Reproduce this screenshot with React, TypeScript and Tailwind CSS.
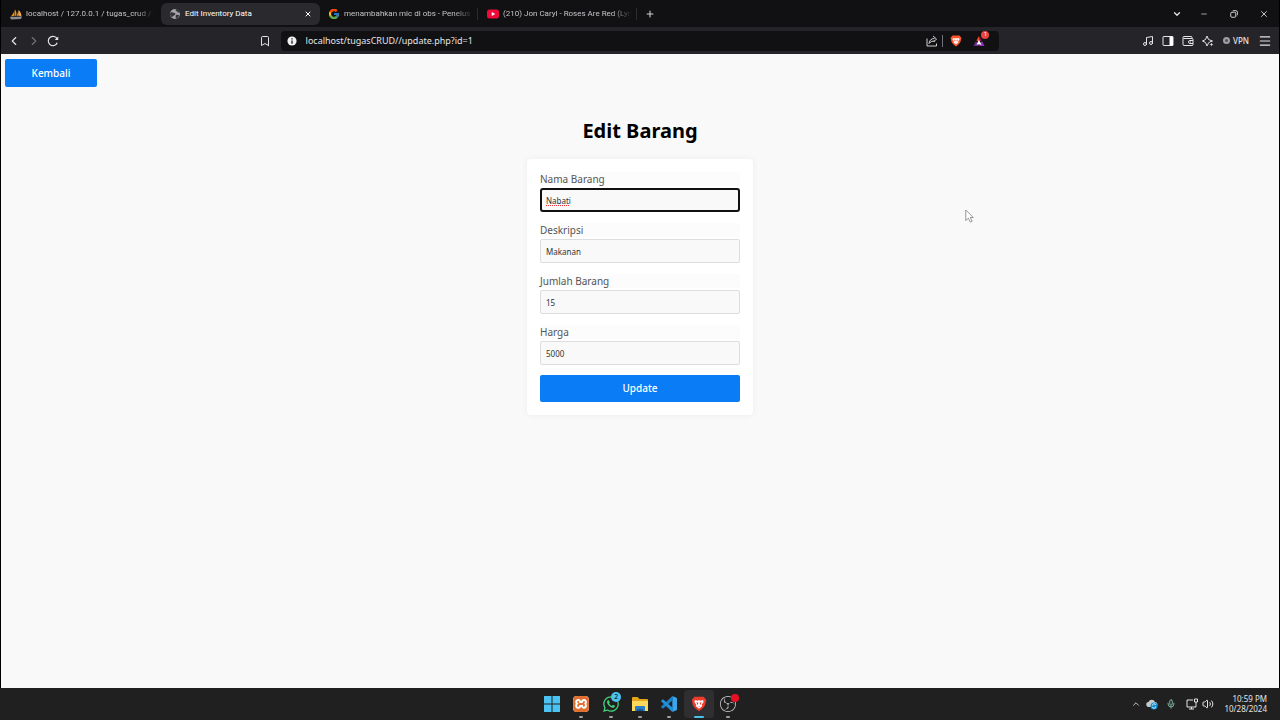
import React from 'react';
import {
  Bookmark,
  ChevronDown,
  ChevronLeft,
  ChevronRight,
  ChevronUp,
  Menu,
  Mic,
  Minus,
  Music,
  Plus,
  Volume2,
  X,
} from 'lucide-react';
import { FcGoogle } from 'react-icons/fc';
import { FaWhatsapp } from 'react-icons/fa';
import { SiObsstudio, SiXampp } from 'react-icons/si';

// --- Icons ---
const PhpMyAdminIcon = () => (
  <svg viewBox="0 0 24 24" className="size-3 shrink-0">
    <path d="M9 3c-1 6-4 11-8 14l8-1zM10 3c3 4 4 9 2 13l-2-1z" fill="#f29111" />
    <path d="M16 4c0 5-1 9-3 12l4-1zM17 4c4 3 6 8 6 13l-6-2z" fill="#f5a94a" />
    <path d="M0 18l24-1-2 5-20 1z" fill="#8b8b94" />
  </svg>
);

const GlobeIcon = () => (
  <svg viewBox="0 0 24 24" className="size-3 shrink-0">
    <circle cx="12" cy="12" r="10" fill="#a3a5aa" />
    <path d="M3 9c3-1 5 1 8 1s2 4-1 5-2 3-4 3-3-3-4-5zM13 3c0 3 3 3 4 5s3 1 5 2l-2-5-4-3zM14 14c3-1 5 0 7 1l-4 5-3 1c-1-2-1-5 0-7z" fill="#35363b" />
  </svg>
);

const YoutubeIcon = () => (
  <svg viewBox="0 0 24 24" className="size-3 shrink-0">
    <rect x="0" y="3" width="24" height="18" rx="5" fill="#f00a3a" />
    <path d="M9.5 8v8l7-4z" fill="#fff" />
  </svg>
);

const ReloadIcon = () => (
  <svg viewBox="0 0 24 24" className="size-3" fill="none" stroke="currentColor" strokeWidth="2.4">
    <path d="M20.500 15.500A9.300 9.300 0 1 1 20.500 8.500" />
    <path d="M22.500 3v7h-7z" fill="currentColor" stroke="none" />
  </svg>
);

const InfoIcon = () => (
  <svg viewBox="0 0 24 24" className="size-[10px] shrink-0">
    <circle cx="12" cy="12" r="11" fill="#f1f1f3" />
    <path d="M10.500 5.500h3v3h-3zM10.500 10.500h3v8h-3z" fill="#111113" />
  </svg>
);

const RestoreIcon = () => (
  <svg viewBox="0 0 16 16" className="size-2" fill="none" stroke="currentColor" strokeWidth="1.8">
    <rect x="1.500" y="4.500" width="10" height="10" rx="2" />
    <path d="M5 2.500C5.500 1.500 6 1.200 7 1.200h4.500a3.300 3.300 0 0 1 3.300 3.300V9c0 1-.5 1.700-1.300 2" />
  </svg>
);

const ShareIcon = () => (
  <svg viewBox="0 0 24 24" className="size-3" fill="none" stroke="currentColor" strokeWidth="1.8">
    <path d="M2 7v15h19v-5" />
    <path d="M6 17c1-7 5-10 11-10M14 2l7 6-6 6M6 17c3-4 7-5 12-5" strokeLinejoin="round" />
  </svg>
);

const RewardsIcon = () => (
  <svg viewBox="0 0 24 24" className="size-3">
    <path d="M12 2L7 11l5 3z" fill="#ff4724" />
    <path d="M12 2l5 9-5 3z" fill="#9e1f63" />
    <path d="M6 12l-5 10h11z" fill="#662d91" />
    <path d="M18 12l5 10H12z" fill="#8f2fc0" />
    <path d="M12 10l5 9H7z" fill="#fff" />
  </svg>
);

const BraveIcon: React.FC<{ className?: string }> = ({ className = '' }) => (
  <svg viewBox="0 0 24 24" className={className}>
    <path d="M5 1h14l4 5-1 3c0 5-3 9-10 14C5 18 2 14 2 9L1 6z" fill="currentColor" />
    <path d="M6 6l4 1 2-1 2 1 4-1 1 3-3 4 1 2-5 4-5-4 1-2-3-4z" fill="#fff" />
    <path d="M8 9l3 1-1 4zM16 9l-3 1 1 4zM10 15l2 1 2-1-2 2z" fill="currentColor" />
  </svg>
);

const SidebarIcon = () => (
  <svg viewBox="0 0 24 24" className="size-3">
    <rect x="2" y="3" width="20" height="18" rx="1" fill="none" stroke="currentColor" strokeWidth="2" />
    <path d="M15 3h7v18h-7z" fill="#fff" />
  </svg>
);

const WalletIcon = () => (
  <svg viewBox="0 0 24 24" className="size-3" fill="none" stroke="currentColor" strokeWidth="2">
    <path d="M20 7V5a2 2 0 0 0-2-2H4a2 2 0 0 0-2 2v14a2 2 0 0 0 2 2h16a2 2 0 0 0 2-2V9a2 2 0 0 0-2-2H3" />
    <path d="M22 11h-6a3 3 0 0 0 0 6h6M16 14h2" />
  </svg>
);

const LeoIcon = () => (
  <svg viewBox="0 0 24 24" className="size-3" fill="none" stroke="currentColor" strokeWidth="2" strokeLinejoin="round">
    <path d="M10 2l3 7 8 3-6 2-2 2-3 6-3-7-6-3 6-3z" />
    <path d="M19 15l1 3 3 1-3 1-1 3-1-3-3-1 3-1z" fill="currentColor" stroke="none" />
  </svg>
);

const WindowsIcon = () => (
  <svg viewBox="0 0 16 16" className="size-4">
    <path d="M0 0h7.500v7.500H0zM8.500 0H16v7.500H8.500zM0 8.500h7.500V16H0zM8.500 8.500H16V16H8.500z" fill="#4cc2f1" />
  </svg>
);

const FolderIcon = () => (
  <svg viewBox="0 0 18 16" className="h-4 w-[18px]">
    <path d="M1 2a1 1 0 0 1 1-1h4.500l2 2H16a1 1 0 0 1 1 1v4H1z" fill="#e5a51b" />
    <path d="M1 5h16v10H1z" fill="#fbd75b" />
    <path d="M4 15v-4a1 1 0 0 1 1-1h8a1 1 0 0 1 1 1v4z" fill="#2b7fc8" />
    <path d="M6 13h6v2H6z" fill="#1c5796" />
  </svg>
);

const VsCodeIcon = () => (
  <svg viewBox="0 0 24 24" className="size-4">
    <path d="M17 0l7 3v18l-7 3z" fill="#3ba4ea" />
    <path d="M17 0l1 6L3 19l-3-2v-1z" fill="#1d7fc4" />
    <path d="M17 24l1-6L3 5 0 7v1z" fill="#2190d8" />
  </svg>
);

const DisplayIcon = () => (
  <svg viewBox="0 0 24 24" className="size-3" fill="none" stroke="currentColor" strokeWidth="2">
    <path d="M14 4H2v14h18v-5M6 22h10M11 18v4" />
    <path d="M17 2h6v6h-6zM20 8v5" />
  </svg>
);

const CloudIcon = () => (
  <svg viewBox="0 0 24 24" className="size-3">
    <path d="M6 18a5 5 0 0 1-1-10 7 7 0 0 1 13 0c3 0 5 2 5 5s-2 5-5 5z" fill="#c5c9cc" />
    <circle cx="16" cy="16" r="7" fill="#1690d0" />
    <path d="M13 15a3 3 0 0 1 6-1M19 17a3 3 0 0 1-6 1" stroke="#fff" strokeWidth="1.500" fill="none" />
  </svg>
);

// --- Tab ---
interface TabProps {
  icon: React.ReactNode;
  title: string;
  active?: boolean;
  divider?: boolean;
}

const Tab: React.FC<TabProps> = ({ icon, title, active = false, divider = false }) => (
  <div
    className={`flex h-[22px] w-[159px] min-w-0 items-center gap-1 pl-2 ${
      active ? 'rounded-md bg-[#2a2a2e] text-white' : 'text-[#c4c4c8]'
    }`}
  >
    {icon}
    <span
      className={`min-w-0 flex-1 whitespace-nowrap font-['Roboto','Noto_Sans',sans-serif] text-[8px] ${
        active ? '' : 'mask-r-from-85%'
      }`}
    >
      {title}
    </span>
    {active ? (
      <button aria-label="Close tab" className="mr-1 p-1">
        <X className="size-2" strokeWidth={3} />
      </button>
    ) : (
      <span className={`mr-px h-3 w-px ${divider ? 'bg-[#2c2c30]' : ''}`} />
    )}
  </div>
);

const TabBar = () => (
  <div className="flex h-[27px] items-center bg-[#111113] pl-px">
    <Tab icon={<PhpMyAdminIcon />} title="localhost / 127.0.0.1 / tugas_crud / i" />
    <Tab icon={<GlobeIcon />} title="Edit Inventory Data" active />
    <Tab icon={<FcGoogle className="size-3 shrink-0" />} title="menambahkan mic di obs - Penelus" divider />
    <Tab icon={<YoutubeIcon />} title="(210) Jon Caryl - Roses Are Red (Lyri" divider />
    <button aria-label="New tab" className="ml-[7px] text-zinc-300">
      <Plus className="size-[10px]" strokeWidth={2.5} />
    </button>
    <div className="ml-auto flex items-center text-zinc-200">
      <button aria-label="Search tabs" className="flex w-6 justify-center">
        <ChevronDown className="size-[10px]" strokeWidth={3} />
      </button>
      <button aria-label="Minimize" className="flex w-[30px] justify-center">
        <Minus className="size-2" />
      </button>
      <button aria-label="Restore" className="flex w-[30px] justify-center">
        <RestoreIcon />
      </button>
      <button aria-label="Close" className="flex w-[30px] justify-center">
        <X className="size-[10px]" />
      </button>
    </div>
  </div>
);

// --- Toolbar ---
const Toolbar = () => (
  <div className="flex h-[27px] items-center bg-[#252529] text-zinc-200">
    <div className="flex flex-1 items-center gap-[6px] pr-[10px] pl-[6px]">
      <button aria-label="Back">
        <ChevronLeft className="size-[14px]" />
      </button>
      <button aria-label="Forward" className="text-zinc-500">
        <ChevronRight className="size-[14px]" />
      </button>
      <button aria-label="Reload">
        <ReloadIcon />
      </button>
      <button aria-label="Bookmark" className="ml-auto">
        <Bookmark className="size-3" />
      </button>
    </div>
    <div className="flex h-5 w-9/16 items-center rounded-sm bg-[#111113] px-[6px]">
      <InfoIcon />
      <input
        aria-label="Address"
        defaultValue="localhost/tugasCRUD//update.php?id=1"
        className="ml-[9px] min-w-0 flex-1 bg-transparent text-[9px] text-zinc-200 outline-none"
      />
      <button aria-label="Share">
        <ShareIcon />
      </button>
      <span className="mx-1 h-3 w-px bg-zinc-500" />
      <button aria-label="Brave Shields" className="mx-[3px] text-[#fb542b]">
        <BraveIcon className="size-3" />
      </button>
      <button aria-label="Brave Rewards" className="relative mx-2">
        <RewardsIcon />
        <span className="absolute -top-1 -right-1 flex size-2 items-center justify-center rounded-full bg-[#e8453c] text-[6px] text-white">
          1
        </span>
      </button>
    </div>
    <div className="flex flex-1 items-center justify-end gap-2 pr-[7px] pl-[9px]">
      <button aria-label="Playlist">
        <Music className="size-3" />
      </button>
      <button aria-label="Sidebar">
        <SidebarIcon />
      </button>
      <button aria-label="Wallet">
        <WalletIcon />
      </button>
      <button aria-label="Leo AI">
        <LeoIcon />
      </button>
      <button className="mx-px flex items-center gap-[3px] text-[8px] font-medium">
        <span className="size-[7px] rounded-full border-2 border-zinc-400 bg-zinc-600" />
        VPN
      </button>
      <button aria-label="Menu">
        <Menu className="size-[14px]" />
      </button>
    </div>
  </div>
);

// --- Form ---
interface FieldProps {
  id: string;
  label: string;
  value: string;
  focused?: boolean;
}

const Field: React.FC<FieldProps> = ({ id, label, value, focused = false }) => (
  <div className="flex flex-col gap-[2px]">
    <label htmlFor={id} className="bg-[#fcfcfc] text-[10px] leading-[14px] text-[#555]">
      {label}
    </label>
    <input
      id={id}
      defaultValue={value}
      spellCheck={false}
      className={`h-6 w-full bg-[#f9f9f9] text-[8px] text-[#333] outline-none ${
        focused
          ? 'rounded-[3px] border-2 border-[#101010] px-1 underline decoration-red-500 decoration-dotted underline-offset-1'
          : 'rounded-xs border border-[#ddd] px-[5px]'
      }`}
    />
  </div>
);

const EditForm = () => (
  <form
    onSubmit={(e) => e.preventDefault()}
    className="flex w-[226px] flex-col gap-[10px] rounded-sm bg-white p-[13px] shadow-[0_0_6px_rgba(0,0,0,0.06)]"
  >
    <div className="flex flex-col gap-[11px]">
      <Field id="nama" label="Nama Barang" value="Nabati" focused />
      <Field id="deskripsi" label="Deskripsi" value="Makanan" />
      <Field id="jumlah" label="Jumlah Barang" value="15" />
      <Field id="harga" label="Harga" value="5000" />
    </div>
    <button type="submit" className="h-[27px] rounded-xs bg-[#0a7cf5] text-[10px] font-medium text-white">
      Update
    </button>
  </form>
);

// --- Taskbar ---
interface TaskProps {
  label: string;
  children: React.ReactNode;
  running?: boolean;
  active?: boolean;
}

const Task: React.FC<TaskProps> = ({ label, children, running = true, active = false }) => (
  <button
    aria-label={label}
    className={`relative flex h-7 items-center justify-center ${active ? 'rounded-sm bg-[#2f2f31]' : ''}`}
  >
    {children}
    {running && (
      <span
        className={`absolute bottom-0 h-[2px] rounded-full ${active ? 'w-[10px] bg-[#4cc2e8]' : 'w-1 bg-zinc-400'}`}
      />
    )}
  </button>
);

const Taskbar = () => (
  <footer className="grid h-8 grid-cols-[1fr_auto_1fr] items-center bg-[#202020]">
    <div />
    <nav className="grid w-[206px] grid-cols-7">
      <Task label="Start" running={false}>
        <WindowsIcon />
      </Task>
      <Task label="XAMPP">
        <SiXampp className="size-4 rounded-sm bg-white text-[#e0702f]" />
      </Task>
      <Task label="WhatsApp">
        <FaWhatsapp className="size-[18px] text-[#3fd27a]" />
        <span className="absolute top-[2px] right-1 flex size-[10px] items-center justify-center rounded-full bg-[#4cc2f1] text-[7px] text-black">
          2
        </span>
      </Task>
      <Task label="File Explorer">
        <FolderIcon />
      </Task>
      <Task label="Visual Studio Code">
        <VsCodeIcon />
      </Task>
      <Task label="Brave" active>
        <BraveIcon className="size-4 text-[#ef3b2d]" />
      </Task>
      <Task label="OBS Studio">
        <SiObsstudio className="size-4 text-zinc-300" />
        <span className="absolute top-1 right-1 size-2 rounded-full bg-[#e81123]" />
      </Task>
    </nav>
    <div className="flex items-center justify-end gap-2 pr-[13px] text-zinc-200">
      <span className="flex items-center gap-[5px]">
        <ChevronUp className="size-[10px]" />
        <CloudIcon />
      </span>
      <Mic className="size-[10px] text-[#8fc9b5]" />
      <span className="flex items-center gap-1 pr-[2px] pl-[2px]">
        <DisplayIcon />
        <Volume2 className="size-3" />
      </span>
      <div className="text-right text-[8px] leading-[10px]">
        <div>10:59 PM</div>
        <div>10/28/2024</div>
      </div>
    </div>
  </footer>
);

export default function App() {
  return (
    <div className="relative flex min-h-screen flex-col font-['Noto_Sans','Open_Sans',sans-serif]">
      <div className="flex flex-1 flex-col border-x border-black">
        <header>
          <TabBar />
          <Toolbar />
        </header>
        <main className="flex flex-1 flex-col items-start bg-[#f9f9f9] px-1 pt-[5px]">
          <a
            href="#kembali"
            className="flex h-7 w-[92px] items-center justify-center rounded-xs bg-[#0a7cf5] text-[10px] font-medium text-white"
          >
            Kembali
          </a>
          <section className="flex flex-col items-center gap-3 self-center pt-7">
            <h1 className="text-[20px] leading-8 font-bold text-black">Edit Barang</h1>
            <EditForm />
          </section>
        </main>
      </div>
      <Taskbar />
      <svg viewBox="0 0 12 18" className="absolute top-[209px] left-[965px] h-[14px] w-[9px]">
        <path d="M1 1v14l3.500-3 2.500 5 2.500-1-2.500-5H11z" fill="#fff" stroke="#777" strokeWidth="1" />
      </svg>
    </div>
  );
}
